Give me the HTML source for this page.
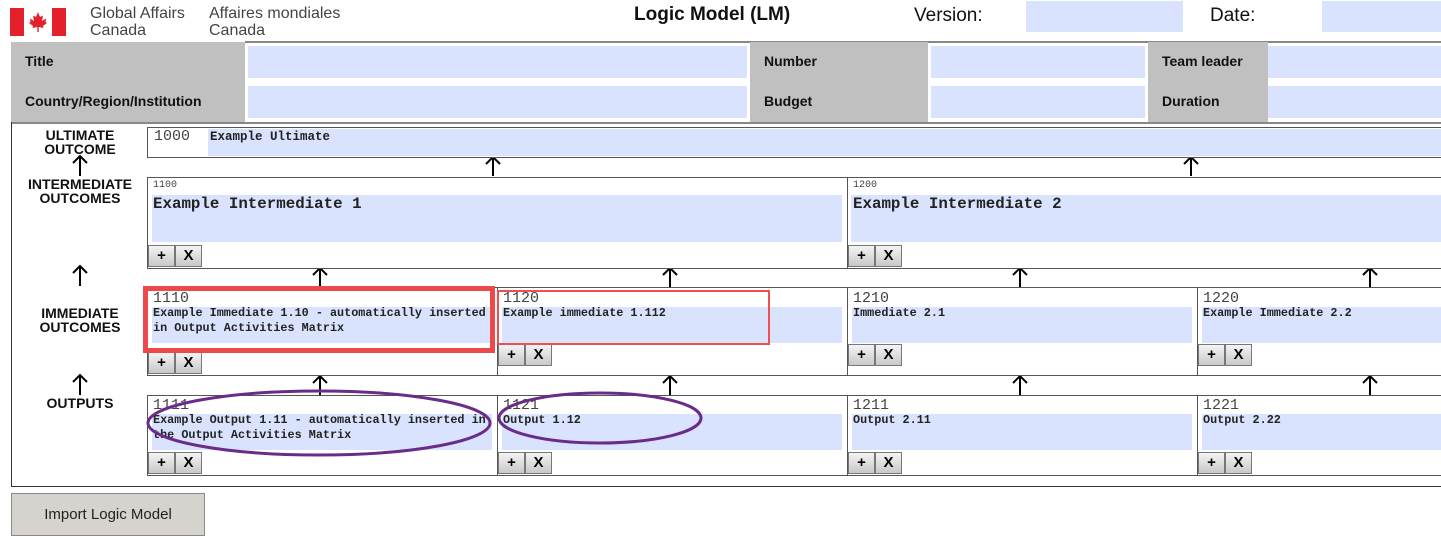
<!DOCTYPE html>
<html><head><meta charset="utf-8"><style>
*{margin:0;padding:0;box-sizing:border-box}
body{width:1441px;height:549px;background:#fff;position:relative;overflow:hidden;font-family:"Liberation Sans",sans-serif}
.a{position:absolute}
.blue{position:absolute;background:#dae3fd}
.gray{position:absolute;background:#c0c0c0}
.lbl{position:absolute;font-weight:bold;font-size:14px;color:#111}
.cat{position:absolute;font-weight:bold;font-size:14px;text-align:center;line-height:14px;width:130px;left:15px;color:#111}
.cell{position:absolute;border:1px solid #555;background:#fff}
.num{position:absolute;font-family:"Liberation Mono",monospace;color:#444;font-size:15px;line-height:15px}
.mono{font-family:"Liberation Mono",monospace;font-weight:bold;color:#222}
.t{font-size:11.8px;line-height:15px}
.btn{position:absolute;width:27px;height:22px;border:1px solid #777;background:linear-gradient(#f4f4f4,#c8c8c8);font-weight:bold;font-size:15px;text-align:center;line-height:20px;color:#000}
</style></head><body>
<!-- header -->
<div class="a" style="left:10px;top:8px;width:14px;height:28px;background:#e4202b"></div>
<div class="a" style="left:52px;top:8px;width:14px;height:28px;background:#e4202b"></div>
<svg class="a" style="left:26px;top:10px" width="24" height="24" viewBox="0 0 24 24"><path d="M12 2 L14 7 L17 5.5 L16 11 L20 8.5 L19.5 12 L21 13 L17 16 L17.5 18 L12.7 17 L12.7 22 L11.3 22 L11.3 17 L6.5 18 L7 16 L3 13 L4.5 12 L4 8.5 L8 11 L7 5.5 L10 7 Z" fill="#e4202b"/></svg>
<div class="a" style="left:90px;top:5px;font-size:16px;line-height:17px;color:#444">Global Affairs<br>Canada</div>
<div class="a" style="left:209px;top:5px;font-size:16px;line-height:17px;color:#444">Affaires mondiales<br>Canada</div>
<div class="a" style="left:634px;top:4px;font-size:19px;font-weight:bold;color:#111">Logic Model (LM)</div>
<div class="a" style="left:914px;top:5px;font-size:19px;color:#111">Version:</div>
<div class="blue" style="left:1026px;top:1px;width:157px;height:31px"></div>
<div class="a" style="left:1210px;top:5px;font-size:19px;color:#111">Date:</div>
<div class="blue" style="left:1322px;top:1px;width:119px;height:31px"></div>
<!-- info -->
<div class="a" style="left:245px;top:41px;width:1196px;height:2px;background:#888"></div>
<div class="gray" style="left:11px;top:42px;width:234px;height:80px"></div>
<div class="lbl" style="left:25px;top:53px">Title</div>
<div class="lbl" style="left:25px;top:93px">Country/Region/Institution</div>
<div class="blue" style="left:248px;top:46px;width:499px;height:32px"></div>
<div class="blue" style="left:248px;top:86px;width:499px;height:32px"></div>
<div class="gray" style="left:750px;top:42px;width:178px;height:80px"></div>
<div class="lbl" style="left:764px;top:53px">Number</div>
<div class="lbl" style="left:764px;top:93px">Budget</div>
<div class="blue" style="left:931px;top:46px;width:214px;height:32px"></div>
<div class="blue" style="left:931px;top:86px;width:214px;height:32px"></div>
<div class="gray" style="left:1148px;top:42px;width:120px;height:80px"></div>
<div class="lbl" style="left:1162px;top:53px">Team leader</div>
<div class="lbl" style="left:1162px;top:93px">Duration</div>
<div class="blue" style="left:1268px;top:46px;width:173px;height:32px"></div>
<div class="blue" style="left:1268px;top:86px;width:173px;height:32px"></div>
<div class="a" style="left:11px;top:122px;width:1440px;height:2px;background:#888"></div>
<!-- main frame -->
<div class="a" style="left:11px;top:122px;width:1440px;height:365px;border:1px solid #333;border-top:none"></div>
<div class="cat" style="top:128px">ULTIMATE<br>OUTCOME</div>
<div class="cat" style="top:177px">INTERMEDIATE<br>OUTCOMES</div>
<div class="cat" style="top:306px">IMMEDIATE<br>OUTCOMES</div>
<div class="cat" style="top:396px">OUTPUTS</div>
<svg class="a" style="left:0;top:0" width="1441" height="549">
<g stroke="#000" stroke-width="2" fill="none">
<path d="M80 156v20M73 163l7-7 7 7"/>
<path d="M80 266v20M73 273l7-7 7 7"/>
<path d="M80 375v20M73 382l7-7 7 7"/>
<path d="M493 157v19M486 164l7-7 7 7"/>
<path d="M1191 157v19M1184 164l7-7 7 7"/>
<path d="M320 268v19M313 275l7-7 7 7"/><path d="M670 268v19M663 275l7-7 7 7"/><path d="M1020 268v19M1013 275l7-7 7 7"/><path d="M1370 268v19M1363 275l7-7 7 7"/>
<path d="M320 376v19M313 383l7-7 7 7"/><path d="M670 376v19M663 383l7-7 7 7"/><path d="M1020 376v19M1013 383l7-7 7 7"/><path d="M1370 376v19M1363 383l7-7 7 7"/>
</g></svg>
<!-- ultimate -->
<div class="cell" style="left:147px;top:127px;width:1300px;height:31px"></div>
<div class="num" style="left:154px;top:129px">1000</div>
<div class="blue" style="left:208px;top:129px;width:1233px;height:27px"></div>
<div class="a mono" style="left:210px;top:130px;font-size:12.5px">Example Ultimate</div>
<!-- intermediate -->
<div class="cell" style="left:147px;top:177px;width:701px;height:92px"></div>
<div class="cell" style="left:847px;top:177px;width:600px;height:92px"></div>
<div class="num" style="left:153px;top:181px;font-size:10px;line-height:10px">1100</div>
<div class="num" style="left:853px;top:181px;font-size:10px;line-height:10px">1200</div>
<div class="blue" style="left:152px;top:195px;width:690px;height:47px"></div>
<div class="blue" style="left:851px;top:195px;width:590px;height:47px"></div>
<div class="a mono" style="left:153px;top:195px;font-size:15.8px">Example Intermediate 1</div>
<div class="a mono" style="left:853px;top:195px;font-size:15.8px">Example Intermediate 2</div>
<div class="btn" style="left:148px;top:245px">+</div><div class="btn" style="left:175px;top:245px">X</div>
<div class="btn" style="left:848px;top:245px">+</div><div class="btn" style="left:875px;top:245px">X</div>
<!-- immediate -->
<div class="cell" style="left:147px;top:287px;width:351px;height:89px"></div>
<div class="cell" style="left:497px;top:287px;width:351px;height:89px"></div>
<div class="cell" style="left:847px;top:287px;width:351px;height:89px"></div>
<div class="cell" style="left:1197px;top:287px;width:250px;height:89px"></div>
<div class="num" style="left:153px;top:291px">1110</div>
<div class="num" style="left:503px;top:291px">1120</div>
<div class="num" style="left:853px;top:291px">1210</div>
<div class="num" style="left:1203px;top:291px">1220</div>
<div class="blue" style="left:152px;top:307px;width:340px;height:36px"></div>
<div class="blue" style="left:502px;top:307px;width:340px;height:36px"></div>
<div class="blue" style="left:852px;top:307px;width:340px;height:36px"></div>
<div class="blue" style="left:1202px;top:307px;width:239px;height:36px"></div>
<div class="a mono t" style="left:153px;top:306px">Example Immediate 1.10 - automatically inserted<br>in Output Activities Matrix</div>
<div class="a mono t" style="left:503px;top:306px">Example immediate 1.112</div>
<div class="a mono t" style="left:853px;top:306px">Immediate 2.1</div>
<div class="a mono t" style="left:1203px;top:306px">Example Immediate 2.2</div>
<div class="btn" style="left:148px;top:352px">+</div><div class="btn" style="left:175px;top:352px">X</div>
<div class="btn" style="left:498px;top:344px">+</div><div class="btn" style="left:525px;top:344px">X</div>
<div class="btn" style="left:848px;top:344px">+</div><div class="btn" style="left:875px;top:344px">X</div>
<div class="btn" style="left:1198px;top:344px">+</div><div class="btn" style="left:1225px;top:344px">X</div>
<!-- outputs -->
<div class="cell" style="left:147px;top:395px;width:351px;height:81px"></div>
<div class="cell" style="left:497px;top:395px;width:351px;height:81px"></div>
<div class="cell" style="left:847px;top:395px;width:351px;height:81px"></div>
<div class="cell" style="left:1197px;top:395px;width:250px;height:81px"></div>
<div class="num" style="left:153px;top:398px">1111</div>
<div class="num" style="left:503px;top:398px">1121</div>
<div class="num" style="left:853px;top:398px">1211</div>
<div class="num" style="left:1203px;top:398px">1221</div>
<div class="blue" style="left:152px;top:414px;width:340px;height:36px"></div>
<div class="blue" style="left:502px;top:414px;width:340px;height:36px"></div>
<div class="blue" style="left:852px;top:414px;width:340px;height:36px"></div>
<div class="blue" style="left:1202px;top:414px;width:239px;height:36px"></div>
<div class="a mono t" style="left:153px;top:413px">Example Output 1.11 - automatically inserted in<br>the Output Activities Matrix</div>
<div class="a mono t" style="left:503px;top:413px">Output 1.12</div>
<div class="a mono t" style="left:853px;top:413px">Output 2.11</div>
<div class="a mono t" style="left:1203px;top:413px">Output 2.22</div>
<div class="btn" style="left:148px;top:452px">+</div><div class="btn" style="left:175px;top:452px">X</div>
<div class="btn" style="left:498px;top:452px">+</div><div class="btn" style="left:525px;top:452px">X</div>
<div class="btn" style="left:848px;top:452px">+</div><div class="btn" style="left:875px;top:452px">X</div>
<div class="btn" style="left:1198px;top:452px">+</div><div class="btn" style="left:1225px;top:452px">X</div>
<!-- annotations -->
<div class="a" style="left:143px;top:286px;width:352px;height:67px;border:5px solid #ec4a4a"></div>
<div class="a" style="left:497px;top:290px;width:273px;height:55px;border:2px solid #ec5050"></div>
<svg class="a" style="left:0;top:0" width="1441" height="549"><g fill="none" stroke="#6a2c8a" stroke-width="3">
<ellipse cx="319" cy="423" rx="171" ry="32"/>
<ellipse cx="600" cy="418" rx="101" ry="25"/></g></svg>
<!-- import button -->
<div class="a" style="left:11px;top:493px;width:194px;height:43px;background:#d6d3ce;border:1px solid #888;font-size:15px;text-align:center;line-height:41px;color:#222">Import Logic Model</div>
</body></html>
